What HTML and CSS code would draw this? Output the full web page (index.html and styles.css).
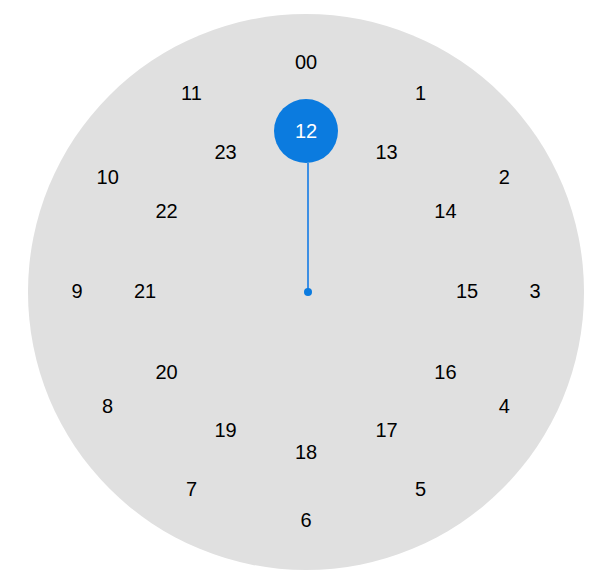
FILE: index.html
```html
<!DOCTYPE html>
<html lang="en">
<head>
    <meta charset="UTF-8">
    <meta name="viewport" content="width=device-width, initial-scale=1.0">
    <title>Hour Picker</title>
    <link rel="stylesheet" href="styles.css">
</head>
<body>
    <div class="clock-face" id="clockFace">
        <div class="hand"></div>
        <div class="hand-pivot"></div>
        <!-- Hour labels generated below -->
    </div>

    <script>
        const face = document.getElementById('clockFace');
        const center = 278;
        const outerRadius = 229;
        const innerRadius = 161;
        let selected = 12;

        function renderHours() {
            for (let i = 0; i < 24; i++) {
                const inner = i >= 12;
                const radius = inner ? innerRadius : outerRadius;
                const angle = (i % 12) * Math.PI / 6;
                const x = center + radius * Math.sin(angle);
                const y = center - radius * Math.cos(angle);

                const label = document.createElement('div');
                label.className = 'hour' + (i === selected ? ' selected' : '');
                label.textContent = i === 0 ? '00' : String(i);
                label.style.left = x + 'px';
                label.style.top = y + 'px';
                face.appendChild(label);
            }
        }

        renderHours();
    </script>
</body>
</html>
```

FILE: styles.css
```css
body {
    margin: 14px 0 0 28px;
    padding: 0;
    background-color: #fff;
    font-family: 'Liberation Sans', Arial, sans-serif;
}
.clock-face {
    position: relative;
    width: 556px;
    height: 556px;
    border-radius: 50%;
    background-color: #e0e0e0;
}
.hand {
    position: absolute;
    left: 279px;
    top: 149px;
    width: 2px;
    height: 129px;
    background: #3d8fe4;
}
.hand-pivot {
    position: absolute;
    left: 276px;
    top: 274px;
    width: 8px;
    height: 8px;
    border-radius: 50%;
    background: #0b7bdf;
}
.hour {
    position: absolute;
    transform: translate(-50%, calc(-50% - 1px));
    font-size: 20px;
    color: #000;
    line-height: 1;
    white-space: nowrap;
}
.hour.selected {
    transform: translate(-50%, -50%);
    width: 64px;
    height: 64px;
    border-radius: 50%;
    background: #0b7bdf;
    color: #fff;
    display: flex;
    align-items: center;
    justify-content: center;
}
```
